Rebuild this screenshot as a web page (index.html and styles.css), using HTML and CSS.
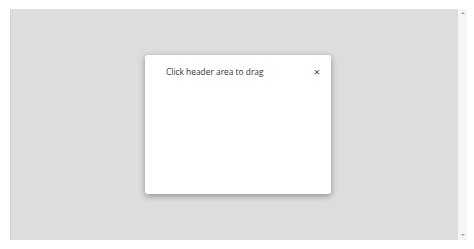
FILE: index.html
```html
<!DOCTYPE html>
<html>
<head>
<meta charset="utf-8">
<link rel="stylesheet" href="styles.css">
</head>
<body>
<div class="frame">
  <div class="pane">
    <div class="dialog">
      <div class="dialog-header">
        <span class="dialog-title">Click header area to drag</span>
        <span class="dialog-close">×</span>
      </div>
      <div class="dialog-body"></div>
    </div>
  </div>
  <div class="scrollbar">
    <span class="arrow arrow-up"></span>
    <span class="arrow arrow-down"></span>
  </div>
</div>
</body>
</html>
```
FILE: styles.css
```css
html, body {
  margin: 0;
  padding: 0;
  background: #ffffff;
  font-family: "Open Sans", "Noto Sans", sans-serif;
}
.frame {
  display: flex;
  margin: 9px 0 0 10px;
  width: 457px;
  height: 231px;
}
.pane {
  flex: 1;
  background: #dcdddf;
  border-left: 1px solid #d2d3d5;
  display: flex;
  align-items: center;
  padding-left: 134px;
}
.dialog {
  width: 186px;
  height: 139px;
  background: #ffffff;
  border-radius: 3px;
  box-shadow: 0 2px 6px rgba(0,0,0,0.35);
  display: flex;
  flex-direction: column;
}
.dialog-header {
  display: flex;
  justify-content: space-between;
  align-items: center;
  padding: 8px 11px 0 21px;
  height: 16px;
  color: #333333;
}
.dialog-title {
  font-size: 8.4px;
}
.dialog-close {
  font-size: 11px;
  color: #444;
}
.scrollbar {
  width: 9px;
  background: #f5f5f5;
  display: flex;
  flex-direction: column;
  justify-content: space-between;
  align-items: center;
  padding: 3px 0 4px;
}
.arrow {
  width: 0;
  height: 0;
  border-left: 2px solid transparent;
  border-right: 2px solid transparent;
}
.arrow-up { border-bottom: 2px solid #a0a0a0; }
.arrow-down { border-top: 2px solid #a0a0a0; }
```
